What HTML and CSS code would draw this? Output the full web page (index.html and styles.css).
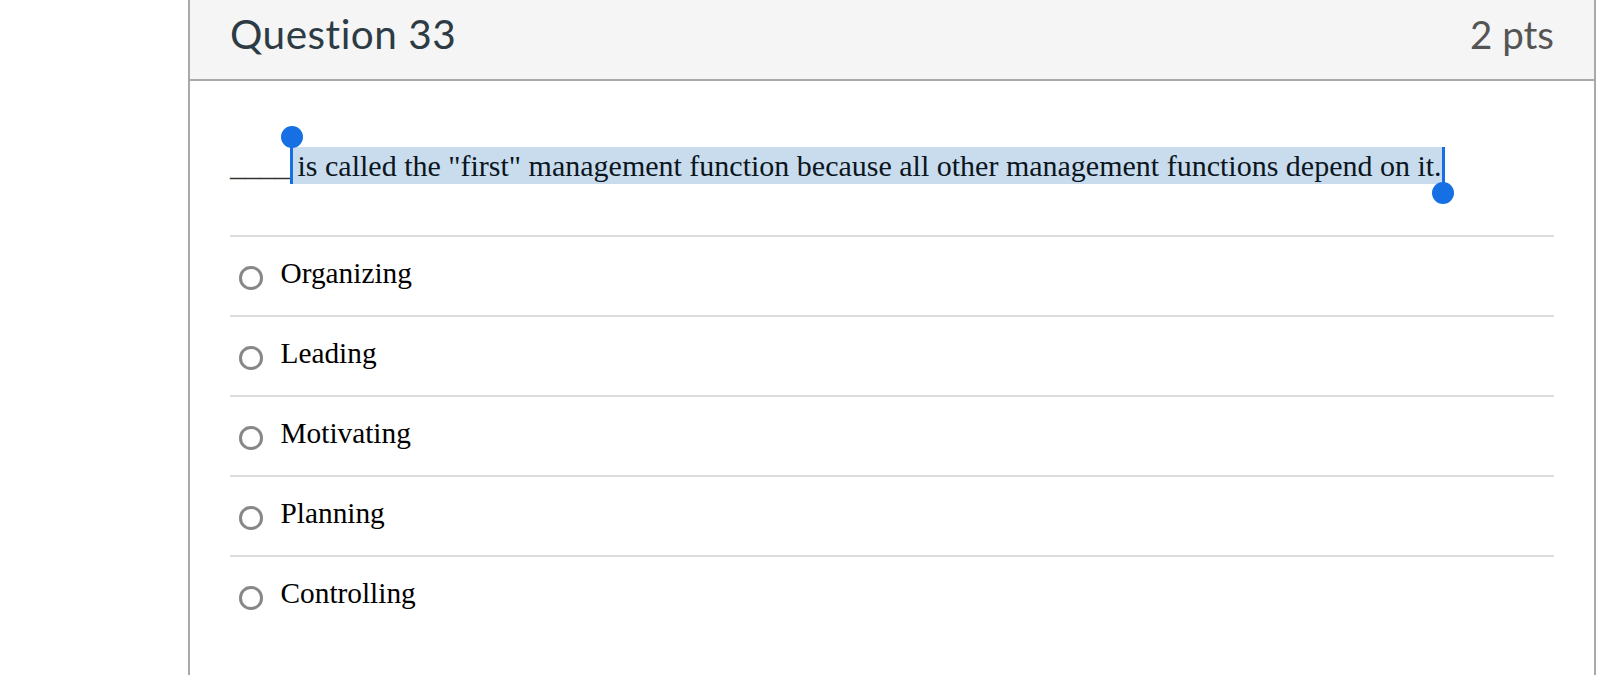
FILE: index.html
```html
<!DOCTYPE html>
<html lang="en">
<head>
<meta charset="utf-8">
<title>Question 33</title>
<link rel="stylesheet" href="styles.css">
</head>
<body>
<div class="card">
  <div class="header">
    <span class="title">Question 33</span>
    <span class="pts">2 pts</span>
  </div>
  <div class="body">
    <p class="question"><span class="blank">____</span><span class="sel"><span class="handle start"></span>&nbsp;is called the "first" management function because all other management functions depend on it.<span class="handle end"></span></span></p>
    <div class="answers">
      <div class="answer"><span class="radio"></span><span class="label">Organizing</span></div>
      <div class="answer"><span class="radio"></span><span class="label">Leading</span></div>
      <div class="answer"><span class="radio"></span><span class="label">Motivating</span></div>
      <div class="answer"><span class="radio"></span><span class="label">Planning</span></div>
      <div class="answer"><span class="radio"></span><span class="label">Controlling</span></div>
    </div>
  </div>
</div>
</body>
</html>
```
FILE: styles.css
```css
html, body {
  margin: 0;
  padding: 0;
  background: #ffffff;
}
body {
  overflow: hidden;
  height: 675px;
}
.card {
  margin-left: 188px;
  width: 1408px;
  box-sizing: border-box;
  border-left: 2px solid #a9a9a9;
  border-right: 2px solid #a9a9a9;
  min-height: 760px;
}
.header {
  background: #f5f5f5;
  box-sizing: border-box;
  border-bottom: 2px solid #a9a9a9;
  height: 81px;
  padding: 11px 40px 0 40px;
  display: flex;
  justify-content: space-between;
  align-items: baseline;
  font-family: Lato, "Open Sans", sans-serif;
  line-height: 46px;
}
.title {
  color: #2d3b45;
  font-size: 40.5px;
  letter-spacing: 0.5px;
}
.pts {
  color: #555555;
  font-size: 38.5px;
}
.body {
  padding: 0 40px;
  font-family: "Liberation Serif", "Times New Roman", serif;
  color: #000000;
}
.question {
  margin: 65.5px 0 0 0;
  font-size: 30px;
  line-height: 37px;
  white-space: nowrap;
}
.blank {
  color: #333333;
}
.sel {
  display: inline-block;
  position: relative;
  background: #c9dcee;
  color: #0b1620;
  line-height: 37px;
}
.handle {
  position: absolute;
  top: 0;
  width: 3px;
  height: 37px;
  background: #1670e4;
}
.handle.start {
  left: 0;
}
.handle.end {
  right: -3px;
}
.handle::after {
  content: "";
  position: absolute;
  width: 22px;
  height: 22px;
  border-radius: 50%;
  background: #1670e4;
  left: -9.5px;
}
.handle.start::after {
  top: -20.5px;
}
.handle.end::after {
  top: 35.5px;
}
.answers {
  margin-top: 51.5px;
}
.answer {
  border-top: 2px solid #dddddd;
  height: 80px;
  box-sizing: border-box;
  display: flex;
  align-items: flex-start;
  padding-top: 19px;
  padding-left: 9px;
  font-size: 29.33px;
  line-height: 34px;
}
.radio {
  width: 23.5px;
  height: 23.5px;
  box-sizing: border-box;
  border: 3px solid #888888;
  border-radius: 50%;
  margin-top: 10px;
  margin-right: 18px;
  flex: none;
}
.label {
  white-space: nowrap;
}
```
